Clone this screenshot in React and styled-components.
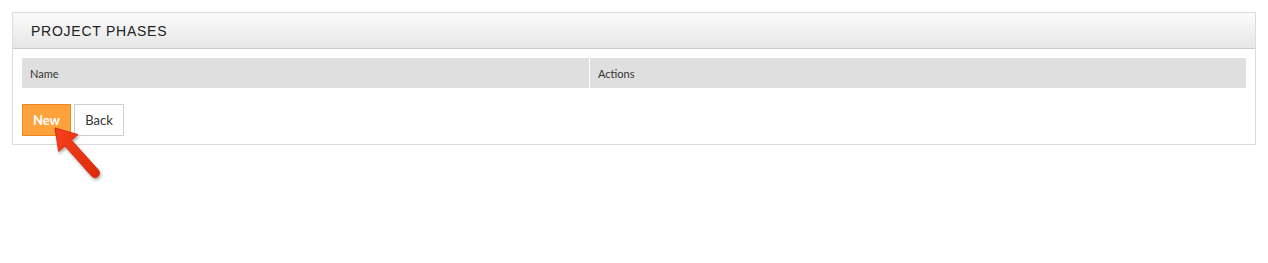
import React from 'react';
import styled, { createGlobalStyle } from 'styled-components';

const GlobalStyle = createGlobalStyle`
  body {
    margin: 0;
    background: #fff;
    font-family: Lato, "Liberation Sans", sans-serif;
  }
`;

const Page = styled.div`
  position: relative;
  padding: 12px 12px 0 12px;
  height: 263px;
  box-sizing: border-box;
`;

const Panel = styled.div`
  width: 1244px;
  border: 1px solid #dcdcdc;
  box-sizing: border-box;
  background: #fff;
`;

const PanelHeader = styled.div`
  height: 35px;
  display: flex;
  align-items: center;
  padding-left: 18px;
  background: linear-gradient(#fbfbfb, #e6e6e6);
  border-bottom: 1px solid #c9c9c9;
  font-family: "Liberation Sans", Arial, sans-serif;
  font-size: 14px;
  letter-spacing: 0.75px;
  color: #222;
`;

const PanelBody = styled.div`
  padding: 9px 9px 8px 9px;
`;

const Table = styled.div`
  display: grid;
  grid-template-columns: 567px 1fr;
  gap: 1px;
  height: 30px;
  background: #fff;
`;

const HeadCell = styled.div`
  background: #dfdfdf;
  display: flex;
  align-items: center;
  padding-left: 8px;
  font-size: 11px;
  color: #333;
`;

const Actions = styled.div`
  display: flex;
  gap: 3px;
  margin-top: 16px;
`;

const Button = styled.button`
  height: 32px;
  width: ${({ $w }) => $w}px;
  padding: 0;
  font-family: Lato, "Liberation Sans", sans-serif;
  font-size: 13px;
  font-weight: ${({ $primary }) => ($primary ? 700 : 400)};
  color: ${({ $primary }) => ($primary ? '#fff' : '#333')};
  background: ${({ $primary }) => ($primary ? '#fea33b' : '#fff')};
  border: 1px solid ${({ $primary }) => ($primary ? '#f0861c' : '#cfcfcf')};
  border-radius: 0;
  cursor: pointer;
`;

const Arrow = styled.svg`
  position: absolute;
  left: 48px;
  top: 122px;
  overflow: visible;
`;

export default function App() {
  return (
    <>
      <GlobalStyle />
      <Page>
        <Panel>
          <PanelHeader>PROJECT PHASES</PanelHeader>
          <PanelBody>
            <Table>
              <HeadCell>Name</HeadCell>
              <HeadCell>Actions</HeadCell>
            </Table>
            <Actions>
              <Button $primary $w={49}>New</Button>
              <Button $w={50}>Back</Button>
            </Actions>
          </PanelBody>
        </Panel>
        <Arrow width="60" height="60" viewBox="0 0 60 60">
          <defs>
            <linearGradient id="ag" x1="0" y1="0" x2="1" y2="1">
              <stop offset="0" stopColor="#f7411c" />
              <stop offset="1" stopColor="#dc2a0c" />
            </linearGradient>
            <filter id="sh" x="-30%" y="-30%" width="160%" height="160%">
              <feDropShadow dx="1" dy="2" stdDeviation="1.5" floodColor="#000" floodOpacity="0.35" />
            </filter>
          </defs>
          <g filter="url(#sh)">
            <path
              d="M7 6 L30 12.5 L23.5 18.2 L50.4 48 A4.5 4.5 0 0 1 43.6 54 L17 24 L10.6 29.5 Z"
              fill="url(#ag)"
              strokeLinejoin="round"
              stroke="#cc240a"
              strokeWidth="0.8"
            />
          </g>
        </Arrow>
      </Page>
    </>
  );
}
